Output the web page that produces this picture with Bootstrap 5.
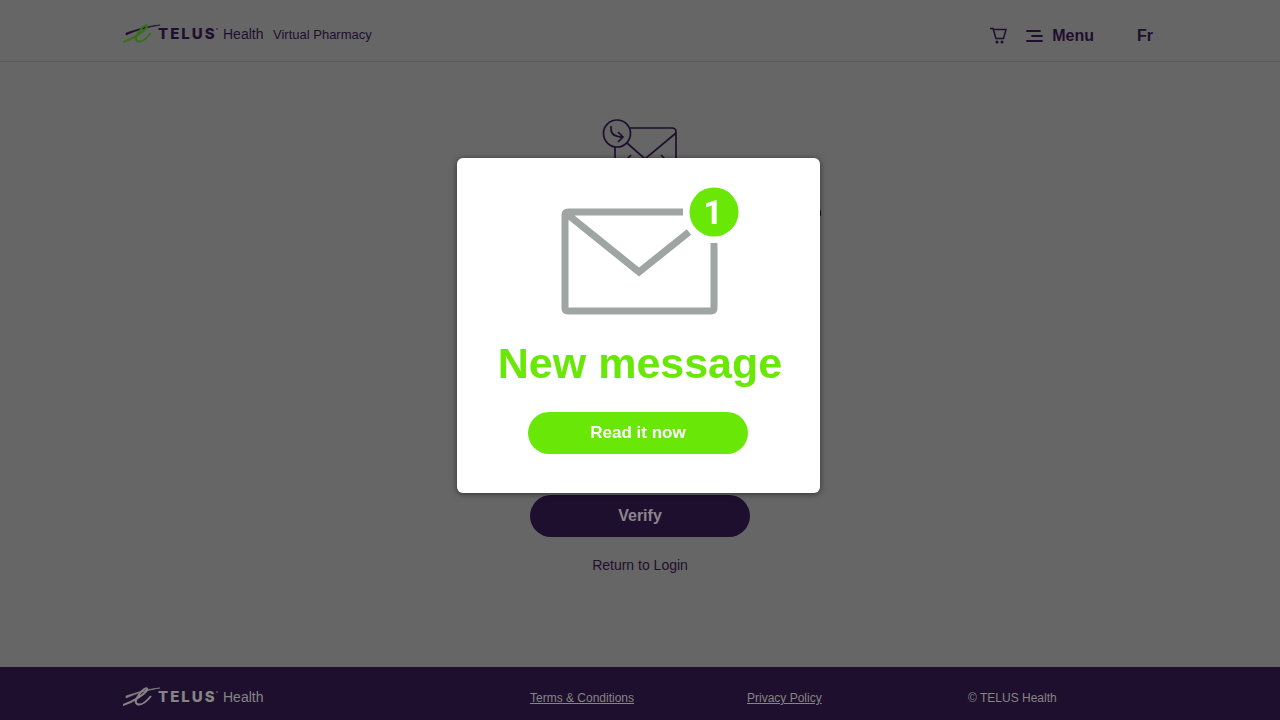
<!DOCTYPE html>
<html lang="en">
<head>
<meta charset="utf-8">
<meta name="viewport" content="width=device-width, initial-scale=1">
<title>TELUS Health Virtual Pharmacy</title>
<link href="https://cdn.jsdelivr.net/npm/bootstrap@5.3.0/dist/css/bootstrap.min.css" rel="stylesheet">
<style>
:root{--ink:#1f0f2e;--page:#666666;--lime:#69e808;--leaf:#347217;--soft:#858585}
body{font-family:"Liberation Sans",Arial,sans-serif;background:var(--page);color:var(--ink)}
.wrap{width:100%;max-width:1082px;padding:0 24px;margin:0 auto}
.top-bar{min-height:62px;border-bottom:1px solid #5a5a5a;padding-top:4px}
.brand-link{color:inherit;text-decoration:none;font-size:13px;line-height:20px}
.brand-link svg{display:block;width:142px;height:24px}
.brand-leaf{--t-color:var(--leaf)}
.brand-plain{--t-color:var(--soft)}
.logo-word{font:800 15px Inter,"Open Sans",sans-serif;letter-spacing:2px}
.logo-sub{font:14px "Liberation Sans",Arial,sans-serif}
.top-nav{padding-top:6px}
.top-action{color:inherit;text-decoration:none;background:none;border:0;padding:0;font-weight:700;font-size:16px;line-height:24px}
.lang-link{margin-left:43px;margin-right:4px}
.content-area{padding-top:57px}
.mail-art{width:76px;height:64px}
.caption-end{width:362px;max-width:100%;height:6px;margin-top:27px;border-right:3px solid var(--ink);border-radius:1px}
.pill{width:220px;height:42px;border:0;border-radius:21px;font-weight:700;line-height:24px;padding:0}
.pill-dark{background:var(--ink);color:#8b868e;margin-top:279px;font-size:16px}
.pill-lime{background:var(--lime);color:#fff;font-size:17px}
.back-link{color:inherit;text-decoration:none;font-size:14px;line-height:20px;margin-top:18px}
.foot{background:var(--ink);color:var(--soft);min-height:53px;font-size:12px;line-height:20px}
.foot a{color:inherit}
.foot-grid{display:grid;grid-template-columns:407fr 217fr 221fr 189fr;align-items:end;padding-top:17px}
.notice .modal-dialog{width:363px;max-width:100%;margin:158px auto 0;left:-2px}
.notice .modal-content{border:0;border-radius:6px;min-height:335px;padding-top:28px;box-shadow:0 1px 6px rgba(0,0,0,.5);color:var(--lime)}
.notice svg{width:184px;height:132px;margin-left:20px}
.notice h1{font-size:43px;line-height:48px;font-weight:700;margin:21px 0 25px 4px;white-space:nowrap}
.badge-count{font:700 34px Roboto,sans-serif}
</style>
</head>
<body class="d-flex flex-column min-vh-100">
<svg class="d-none" aria-hidden="true">
  <symbol id="swoosh" viewBox="0 0 38 24">
    <path d="M3 12C12 9 24 5 37 4C25 6 14 9 3 14Z" fill="currentColor" stroke="currentColor" stroke-width=".6"/>
    <path d="M0 21C10 18 22 10 24 6C25 3 21 4 18 8C14 13 11 18 14 20C18 22 24 17 28 12" fill="none" stroke="var(--t-color)" stroke-width="2" stroke-linejoin="round"/>
  </symbol>
</svg>
<header class="top-bar d-flex">
  <div class="wrap d-flex align-items-center justify-content-between">
    <a class="brand-link brand-leaf d-flex align-items-center gap-2" href="#">
      <svg viewBox="0 0 142 24" role="img" aria-label="TELUS Health" fill="currentColor">
        <use href="#swoosh" width="38" height="24"/>
        <text class="logo-word" x="35" y="18">TELUS</text>
        <circle cx="94" cy="8" r=".8"/>
        <text class="logo-sub" x="100" y="18">Health</text>
      </svg>
      <span class="pt-1">Virtual Pharmacy</span>
    </a>
    <nav class="top-nav d-flex align-items-center" aria-label="Main">
      <a class="top-action me-3" href="#" aria-label="Cart"><svg class="d-block" width="20" height="18" viewBox="0 0 20 18" fill="none" stroke="currentColor" stroke-width="1.5"><path d="M0 1.500H3L6 11.500H13.500L16 2.500H4"/><g fill="currentColor" stroke="none"><circle cx="7" cy="15" r="1.500"/><circle cx="12" cy="15" r="1.500"/></g></svg></a>
      <button class="top-action d-flex align-items-center gap-2" type="button"><svg width="18" height="14" viewBox="0 0 18 14" stroke="currentColor" stroke-width="1.800" stroke-linecap="round"><path d="M1 2H14M6 7H16M1 12H16"/></svg>Menu</button>
      <a class="top-action lang-link" href="#">Fr</a>
    </nav>
  </div>
</header>
<main class="content-area flex-grow-1 d-flex flex-column align-items-center">
  <svg class="mail-art" viewBox="0 0 76 64" fill="none" stroke="currentColor" stroke-width="1.700" aria-hidden="true">
    <circle cx="15" cy="14.500" r="13.500"/><path d="M9 7V10Q9 18 21 18M16 13L21 18L16 23"/>
    <path d="M28 9H70Q74 9 74 13V62H13V28M25 24L43 40L74 14M29 36L24 41M59 36L64 41"/>
  </svg>
  <div class="caption-end"></div>
  <button class="pill pill-dark" type="button">Verify</button>
  <a class="back-link" href="#">Return to Login</a>
</main>
<footer class="foot">
  <div class="wrap foot-grid">
    <a class="brand-link brand-plain" href="#">
      <svg viewBox="0 0 142 24" role="img" aria-label="TELUS Health" fill="currentColor">
        <use href="#swoosh" width="38" height="24"/>
        <text class="logo-word" x="35" y="18">TELUS</text>
        <circle cx="94" cy="8" r=".8"/>
        <text class="logo-sub" x="100" y="18">Health</text>
      </svg>
    </a>
    <div><a href="#">Terms &amp; Conditions</a></div>
    <div><a href="#">Privacy Policy</a></div>
    <span>© TELUS Health</span>
  </div>
</footer>
<div class="modal d-block notice" role="dialog" aria-modal="true" aria-labelledby="notice-title">
  <div class="modal-dialog">
    <div class="modal-content align-items-center">
      <svg viewBox="0 0 184 132" aria-hidden="true">
        <path d="M127 26H12Q9 26 9 29V122Q9 125 12 125H155Q158 125 158 122V57M11 28L83 86L133 46" fill="none" stroke="#9ea5a3" stroke-width="7"/>
        <circle cx="158" cy="26" r="24.500" fill="#69e808"/>
        <text class="badge-count" x="157" y="38" text-anchor="middle" fill="#fff">1</text>
      </svg>
      <h1 id="notice-title">New message</h1>
      <button class="pill pill-lime" type="button">Read it now</button>
    </div>
  </div>
</div>
<script src="https://cdn.jsdelivr.net/npm/bootstrap@5.3.0/dist/js/bootstrap.bundle.min.js"></script>
</body>
</html>
